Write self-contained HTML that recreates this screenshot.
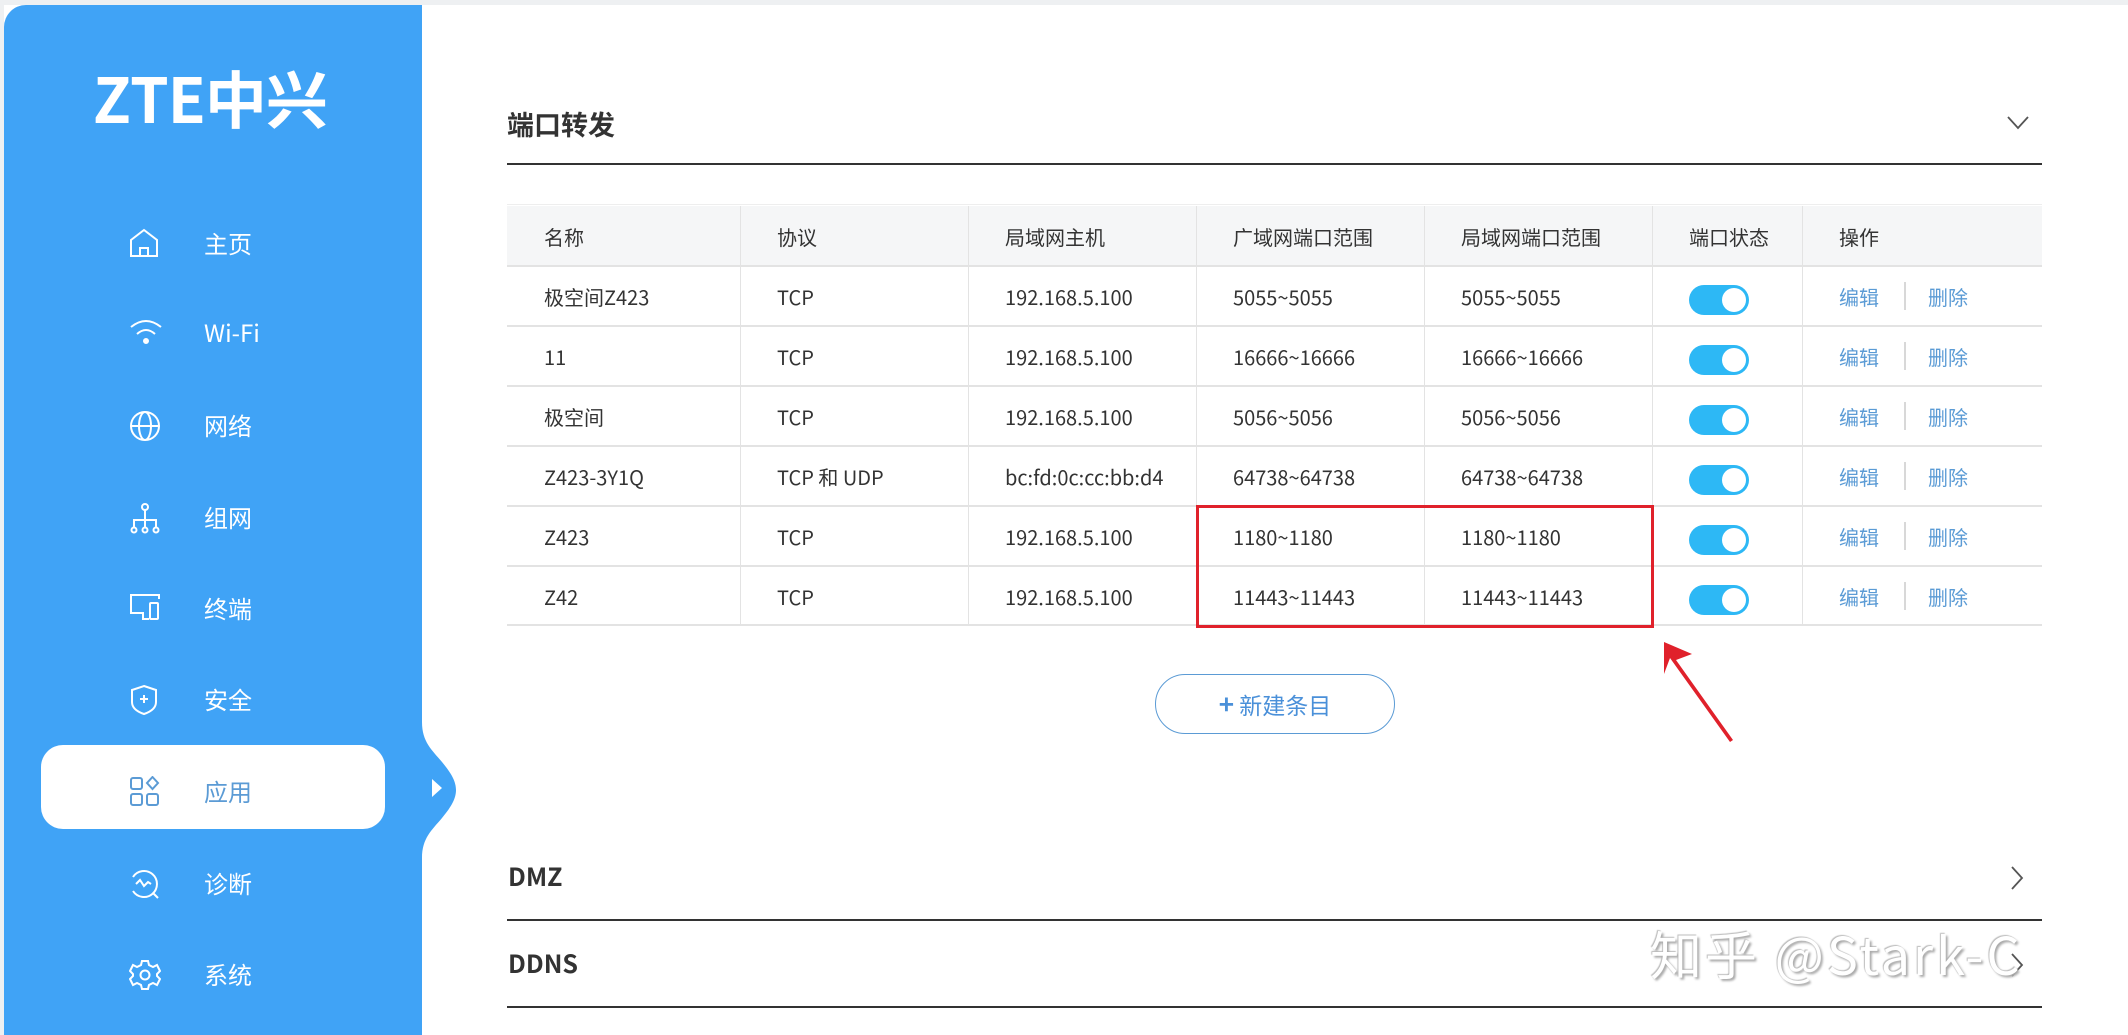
<!DOCTYPE html>
<html><head><meta charset="utf-8"><style>
*{margin:0;padding:0;box-sizing:border-box}
body{width:2128px;height:1035px;overflow:hidden;background:#eef0f2;font-family:"Noto Sans CJK SC","Liberation Sans",sans-serif;position:relative}
.main{position:absolute;left:4px;top:5px;width:2124px;height:1030px;background:#fff}
.side{position:absolute;left:4px;top:5px;width:418px;height:1030px;background:#40a3f6;border-top-left-radius:22px}
.logo{position:absolute;left:93px;top:56px;color:#fff;font-size:62px;font-weight:bold;letter-spacing:-1px;line-height:80px}
.nav{position:absolute;left:0;width:418px;height:60px;color:#fff;font-size:24px}
.nav svg{position:absolute;left:129px;top:15px}
.nav span{position:absolute;left:204px;top:50%;transform:translateY(-50%);line-height:30px}
.pill{position:absolute;left:41px;top:745px;width:344px;height:84px;background:#fff;border-radius:22px}
.t{position:absolute;font-size:20px;color:#333;white-space:nowrap;line-height:28px}
.hd{position:absolute;left:507px;top:206px;width:1535px;height:60px;background:#f5f6f7}
.hl{position:absolute;left:507px;height:2px;background:#e3e3e3;width:1535px}
.vl{position:absolute;top:206px;height:418px;width:1px;background:#e3e3e3}
.tg{position:absolute;left:1689px;width:60px;height:30px;border-radius:15px;background:#2db8f5}
.tg::after{content:"";position:absolute;right:3px;top:3px;width:24px;height:24px;border-radius:50%;background:#fff}
.lk{position:absolute;font-size:20px;color:#5b9bd5;line-height:28px}
.sep{position:absolute;left:1904px;width:2px;height:28px;background:#d8d8d8}
</style></head><body>
<div class="main"></div>
<div class="side"></div>
<div class="logo">ZTE中兴</div>
<svg style="position:absolute;left:422px;top:722px" width="36" height="136" viewBox="0 0 36 136"><path d="M0 0 C0 20 10 28 20 40 C30 52 34 60 34 68 C34 76 30 84 20 96 C10 108 0 116 0 136Z" fill="#40a3f6"/><path d="M10 57 L20 66 L10 75Z" fill="#fff"/></svg>
<div class="pill"></div>

<div class="nav" style="top:213px"><svg width="30" height="30" viewBox="0 0 30 30" fill="none" stroke="#fff" stroke-width="2"><path d="M2 12 L15 2 L28 12 V28 H2Z"/><path d="M11 28 V20 H19 V28"/></svg><span>主页</span></div>
<div class="nav" style="top:302px"><svg width="34" height="30" viewBox="0 0 34 30" fill="none" stroke="#fff" stroke-width="2"><path d="M2 10 Q17 -2 32 10"/><path d="M8 17 Q17 9 26 17"/><circle cx="17" cy="24" r="2" fill="#fff"/></svg><span>Wi-Fi</span></div>
<div class="nav" style="top:395px"><svg width="32" height="32" viewBox="0 0 32 32" fill="none" stroke="#fff" stroke-width="2"><circle cx="16" cy="16" r="14"/><ellipse cx="16" cy="16" rx="6" ry="14"/><path d="M2 16 H30"/></svg><span>网络</span></div>
<div class="nav" style="top:487px"><svg width="32" height="32" viewBox="0 0 32 32" fill="none" stroke="#fff" stroke-width="2"><circle cx="16" cy="5" r="3"/><path d="M16 8 V18 M5 26 V18 H27 V26 M16 18 V26"/><circle cx="5" cy="28" r="2.5"/><circle cx="16" cy="28" r="2.5"/><circle cx="27" cy="28" r="2.5"/></svg><span>组网</span></div>
<div class="nav" style="top:578px"><svg width="32" height="30" viewBox="0 0 32 30" fill="none" stroke="#fff" stroke-width="2"><path d="M30 6 V2 H2 V20 H14 V26 H20"/><rect x="21" y="10" width="8" height="16" rx="1"/></svg><span>终端</span></div>
<div class="nav" style="top:669px"><svg width="30" height="32" viewBox="0 0 30 32" fill="none" stroke="#fff" stroke-width="2"><path d="M15 2 L27 6 V18 Q27 26 15 30 Q3 26 3 18 V6Z"/><path d="M15 11 V19 M11 15 H19"/></svg><span>安全</span></div>
<div class="nav" style="top:761px"><svg width="32" height="32" viewBox="0 0 32 32" fill="none" stroke="#5b9bd5" stroke-width="2"><rect x="2" y="2" width="11" height="11" rx="2"/><rect x="2" y="18" width="11" height="11" rx="2"/><rect x="18" y="18" width="11" height="11" rx="2"/><path d="M23.5 1 L29 7 L23.5 13 L18 7Z"/></svg><span style="color:#5b9bd5">应用</span></div>
<div class="nav" style="top:853px"><svg width="32" height="32" viewBox="0 0 32 32" fill="none" stroke="#fff" stroke-width="2"><path d="M4 9 A13 13 0 1 1 4 23"/><path d="M7 16 L11 12 L15 18 L19 14 L22 16"/><path d="M24 25 L29 30"/></svg><span>诊断</span></div>
<div class="nav" style="top:944px"><svg width="32" height="32" viewBox="0 0 32 32" fill="none" stroke="#fff" stroke-width="2"><path d="M13 2 H19 L20 6 L24 8 L28 6 L31 12 L28 15 V17 L31 20 L28 26 L24 24 L20 26 L19 30 H13 L12 26 L8 24 L4 26 L1 20 L4 17 V15 L1 12 L4 6 L8 8 L12 6Z"/><circle cx="16" cy="16" r="4.5"/></svg><span>系统</span></div>

<div class="t" style="left:507px;top:104px;font-size:27px;font-weight:bold;color:#333;line-height:40px">端口转发</div>
<svg style="position:absolute;left:2007px;top:116px" width="22" height="14" viewBox="0 0 22 14"><path d="M1 1 L11 12 L21 1" fill="none" stroke="#555" stroke-width="1.8"/></svg>
<div style="position:absolute;left:507px;top:163px;width:1535px;height:2px;background:#333"></div>

<div class="hd"></div>
<div class="hl" style="top:204px;height:1px;background:#eee"></div>
<div class="hl" style="top:265px"></div>
<div class="hl" style="top:325px"></div>
<div class="hl" style="top:385px"></div>
<div class="hl" style="top:445px"></div>
<div class="hl" style="top:505px"></div>
<div class="hl" style="top:565px"></div>
<div class="hl" style="top:624px"></div>
<div class="vl" style="left:740px"></div><div class="vl" style="left:968px"></div><div class="vl" style="left:1196px"></div><div class="vl" style="left:1424px"></div><div class="vl" style="left:1652px"></div><div class="vl" style="left:1802px"></div>

<div class="t" style="left:544px;top:223px">名称</div><div class="t" style="left:777px;top:223px">协议</div><div class="t" style="left:1005px;top:223px">局域网主机</div><div class="t" style="left:1233px;top:223px">广域网端口范围</div><div class="t" style="left:1461px;top:223px">局域网端口范围</div><div class="t" style="left:1689px;top:223px">端口状态</div><div class="t" style="left:1839px;top:223px">操作</div>

<div class="t" style="left:544px;top:283px">极空间Z423</div><div class="t" style="left:777px;top:283px">TCP</div><div class="t" style="left:1005px;top:283px">192.168.5.100</div><div class="t" style="left:1233px;top:283px">5055~5055</div><div class="t" style="left:1461px;top:283px">5055~5055</div>
<div class="t" style="left:544px;top:343px">11</div><div class="t" style="left:777px;top:343px">TCP</div><div class="t" style="left:1005px;top:343px">192.168.5.100</div><div class="t" style="left:1233px;top:343px">16666~16666</div><div class="t" style="left:1461px;top:343px">16666~16666</div>
<div class="t" style="left:544px;top:403px">极空间</div><div class="t" style="left:777px;top:403px">TCP</div><div class="t" style="left:1005px;top:403px">192.168.5.100</div><div class="t" style="left:1233px;top:403px">5056~5056</div><div class="t" style="left:1461px;top:403px">5056~5056</div>
<div class="t" style="left:544px;top:463px">Z423-3Y1Q</div><div class="t" style="left:777px;top:463px">TCP 和 UDP</div><div class="t" style="left:1005px;top:463px">bc:fd:0c:cc:bb:d4</div><div class="t" style="left:1233px;top:463px">64738~64738</div><div class="t" style="left:1461px;top:463px">64738~64738</div>
<div class="t" style="left:544px;top:523px">Z423</div><div class="t" style="left:777px;top:523px">TCP</div><div class="t" style="left:1005px;top:523px">192.168.5.100</div><div class="t" style="left:1233px;top:523px">1180~1180</div><div class="t" style="left:1461px;top:523px">1180~1180</div>
<div class="t" style="left:544px;top:583px">Z42</div><div class="t" style="left:777px;top:583px">TCP</div><div class="t" style="left:1005px;top:583px">192.168.5.100</div><div class="t" style="left:1233px;top:583px">11443~11443</div><div class="t" style="left:1461px;top:583px">11443~11443</div>

<div class="tg" style="top:285px"></div><div class="tg" style="top:345px"></div><div class="tg" style="top:405px"></div><div class="tg" style="top:465px"></div><div class="tg" style="top:525px"></div><div class="tg" style="top:585px"></div>
<div class="lk" style="left:1839px;top:283px">编辑</div><div class="sep" style="top:282px"></div><div class="lk" style="left:1928px;top:283px">删除</div>
<div class="lk" style="left:1839px;top:343px">编辑</div><div class="sep" style="top:342px"></div><div class="lk" style="left:1928px;top:343px">删除</div>
<div class="lk" style="left:1839px;top:403px">编辑</div><div class="sep" style="top:402px"></div><div class="lk" style="left:1928px;top:403px">删除</div>
<div class="lk" style="left:1839px;top:463px">编辑</div><div class="sep" style="top:462px"></div><div class="lk" style="left:1928px;top:463px">删除</div>
<div class="lk" style="left:1839px;top:523px">编辑</div><div class="sep" style="top:522px"></div><div class="lk" style="left:1928px;top:523px">删除</div>
<div class="lk" style="left:1839px;top:583px">编辑</div><div class="sep" style="top:582px"></div><div class="lk" style="left:1928px;top:583px">删除</div>

<div style="position:absolute;left:1196px;top:505px;width:458px;height:123px;border:3.5px solid #e0212b"></div>
<svg style="position:absolute;left:1650px;top:630px" width="100" height="120" viewBox="0 0 100 120"><path d="M80 112 L20 28 L14 44 L14 12 L42 24 L26 30 L83 110Z" fill="#e0212b"/></svg>

<div style="position:absolute;left:1155px;top:674px;width:240px;height:60px;border:1.5px solid #5b9bd5;border-radius:30px;color:#4a90d9;font-size:23px;text-align:center;line-height:57px"><b style="font-size:26px">+</b> 新建条目</div>

<div class="t" style="left:508px;top:858px;font-size:25px;font-weight:bold;color:#333;line-height:36px">DMZ</div>
<svg style="position:absolute;left:2010px;top:866px" width="14" height="24" viewBox="0 0 14 24"><path d="M2 1 L12 12 L2 23" fill="none" stroke="#555" stroke-width="1.8"/></svg>
<div style="position:absolute;left:507px;top:919px;width:1535px;height:2px;background:#333"></div>
<div class="t" style="left:508px;top:945px;font-size:25px;font-weight:bold;color:#333;line-height:36px">DDNS</div>
<svg style="position:absolute;left:2010px;top:953px" width="14" height="24" viewBox="0 0 14 24"><path d="M2 1 L12 12 L2 23" fill="none" stroke="#555" stroke-width="1.8"/></svg>
<div style="position:absolute;left:507px;top:1006px;width:1535px;height:2px;background:#333"></div>

<div style="position:absolute;left:1650px;top:920px;font-size:52px;line-height:66px;letter-spacing:3px;color:#fff;text-shadow:2px 2px 2px #aaa,-1px -1px 1px #bbb;white-space:nowrap">知乎 @Stark-C</div>
</body></html>
